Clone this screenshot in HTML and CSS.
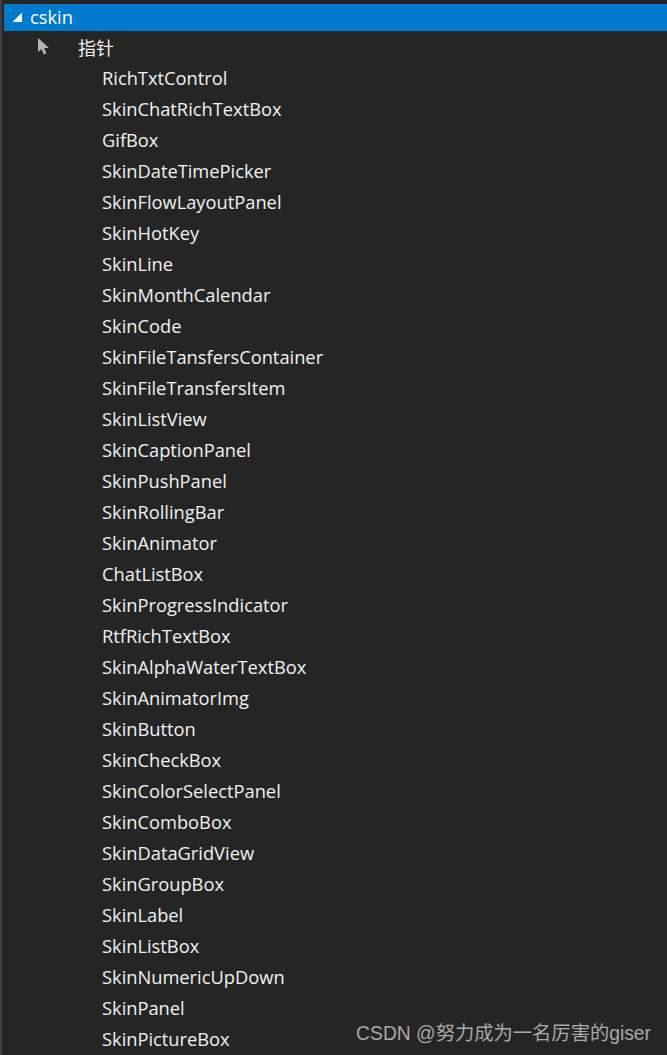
FILE: index.html
```html
<!DOCTYPE html>
<html lang="zh-CN">
<head>
  <meta charset="UTF-8">
  <title>cskin</title>
  <link rel="stylesheet" href="styles.css">
</head>
<body>
  <div class="toolbox">
    <div class="group-header">
      <svg class="arrow" width="11" height="11" viewBox="0 0 11 11"><polygon points="10,0.5 10,10 0.5,10" fill="#fff"/></svg>
      <span>cskin</span>
    </div>
    <div class="pointer-row">
      <svg class="cursor" width="13" height="19" viewBox="0 0 13 19"><polygon points="1,1 1,15 4.4,12 6.8,17.5 9.4,16.2 7.1,11 12,11" fill="#b4b4b4"/></svg>
      <span class="pointer-label">指针</span>
    </div>
    <ul class="items">
      <li>RichTxtControl</li>
      <li>SkinChatRichTextBox</li>
      <li>GifBox</li>
      <li>SkinDateTimePicker</li>
      <li>SkinFlowLayoutPanel</li>
      <li>SkinHotKey</li>
      <li>SkinLine</li>
      <li>SkinMonthCalendar</li>
      <li>SkinCode</li>
      <li>SkinFileTansfersContainer</li>
      <li>SkinFileTransfersItem</li>
      <li>SkinListView</li>
      <li>SkinCaptionPanel</li>
      <li>SkinPushPanel</li>
      <li>SkinRollingBar</li>
      <li>SkinAnimator</li>
      <li>ChatListBox</li>
      <li>SkinProgressIndicator</li>
      <li>RtfRichTextBox</li>
      <li>SkinAlphaWaterTextBox</li>
      <li>SkinAnimatorImg</li>
      <li>SkinButton</li>
      <li>SkinCheckBox</li>
      <li>SkinColorSelectPanel</li>
      <li>SkinComboBox</li>
      <li>SkinDataGridView</li>
      <li>SkinGroupBox</li>
      <li>SkinLabel</li>
      <li>SkinListBox</li>
      <li>SkinNumericUpDown</li>
      <li>SkinPanel</li>
      <li>SkinPictureBox</li>
    </ul>
  </div>
  <div class="watermark">CSDN @努力成为一名厉害的giser</div>
</body>
</html>
```

FILE: styles.css
```css
html, body {
  margin: 0;
  height: 100%;
}

body {
  position: relative;
  overflow: hidden;
  box-sizing: border-box;
  border-left: 2px solid #3f3f46;
  background: #252526;
  color: #f1f1f1;
  font-family: "Open Sans", "Noto Sans CJK SC", sans-serif;
  font-size: 18.3px;
}

.toolbox {
  padding: 4px 0 0 2px;
}

.group-header {
  display: flex;
  align-items: center;
  box-sizing: border-box;
  height: 27px;
  padding-bottom: 2px;
  background: #007acc;
  color: #fff;
}

.arrow {
  margin: 2px 7px 0 8px;
}

.pointer-row {
  display: flex;
  align-items: center;
  height: 31px;
  padding-left: 33px;
}

.cursor {
  margin-right: 28px;
}

.pointer-label {
  font-size: 18px;
}

.items {
  list-style: none;
  margin: 0;
  padding: 0 0 0 98px;
}

.items li {
  height: 31px;
  line-height: 31px;
}

.watermark {
  position: absolute;
  right: 16px;
  bottom: 9px;
  color: #a9a9a9;
  font-family: "Liberation Sans", "Noto Sans CJK SC", sans-serif;
  font-size: 19.3px;
}
```
